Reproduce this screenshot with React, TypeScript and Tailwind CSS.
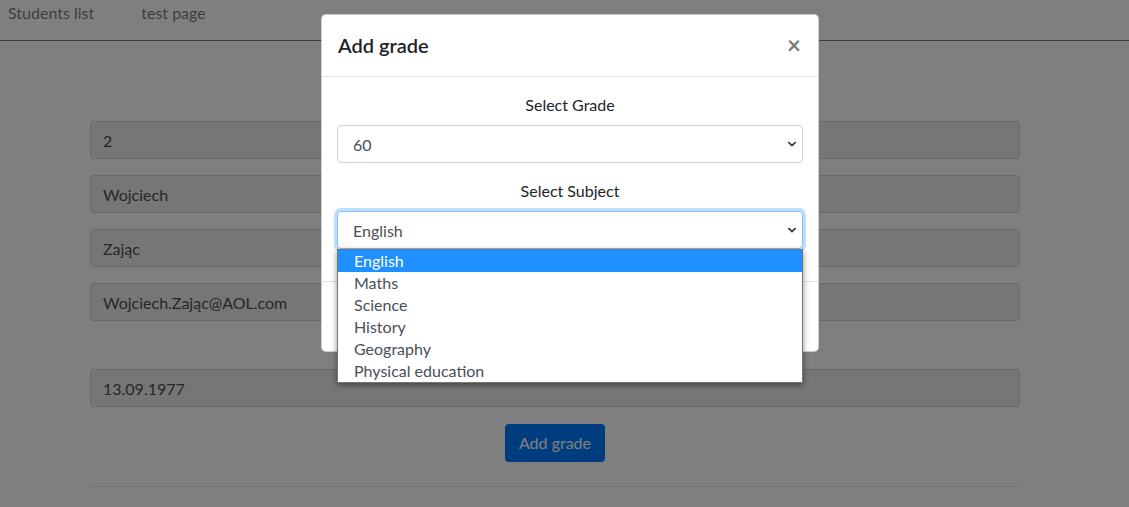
import React from "react";

const font = { fontFamily: 'Lato, "Noto Sans", sans-serif' };

function Chevron() {
  return (
    <svg width="10" height="7" viewBox="0 0 10 7" className="absolute right-[5px] top-1/2 -translate-y-1/2">
      <path d="M1.3 1.6 L5 5 L8.7 1.6" fill="none" stroke="#3a3f44" strokeWidth="1.7" />
    </svg>
  );
}

export default function App() {
  const fields = ["2", "Wojciech", "Zając", "Wojciech.Zając@AOL.com"];
  const options = ["English", "Maths", "Science", "History", "Geography", "Physical education"];
  return (
    <div className="relative w-[1129px] h-[507px] overflow-hidden bg-white text-[16px] text-[#212529]" style={font}>
      {/* navbar */}
      <div className="h-[41px] border-b border-[#787878] flex items-start pl-[8px] pt-[1px] gap-[47px] text-[rgba(0,0,0,0.55)]">
        <span className="leading-[24px]">Students list</span>
        <span className="leading-[24px]">test page</span>
      </div>
      {/* form */}
      <div className="ml-[90px] w-[930px] pt-[80px] flex flex-col">
        {fields.map((f) => (
          <div key={f} className="h-[38px] mb-[16px] rounded-[4px] border border-[#ced4da] bg-[#e9ecef] px-[12px] pt-[1px] flex items-center text-[#495057]">
            {f}
          </div>
        ))}
        <div className="h-[32px]" />
        <div className="h-[38px] rounded-[4px] border border-[#ced4da] bg-[#e9ecef] px-[12px] pt-[1px] flex items-center text-[#495057]">
          13.09.1977
        </div>
        <div className="flex justify-center mt-[17px]">
          <div className="w-[100px] h-[38px] rounded-[4px] bg-[#007bff] text-white flex items-center justify-center">Add grade</div>
        </div>
        <div className="mt-[24px] border-t border-[rgba(0,0,0,0.1)]" />
      </div>

      {/* backdrop */}
      <div className="absolute inset-0 bg-black/50" />

      {/* modal */}
      <div className="absolute left-[321px] top-[14px] w-[498px] rounded-[5px] bg-white border border-[rgba(0,0,0,0.2)] flex flex-col">
        <div className="h-[62px] flex items-center justify-between px-[16px] pb-[2px] border-b border-[#dee2e6]">
          <span className="text-[20px] font-semibold leading-[30px] text-[#212529]">Add grade</span>
          <span className="text-[24px] font-bold text-[#7a7a7a] leading-none mr-[1px]">×</span>
        </div>
        <div className="px-[15px] pt-[16px] pb-[32px] flex flex-col">
          <div className="text-center leading-[24px] mb-[8px]">Select Grade</div>
          <div className="relative h-[38px] rounded-[4px] border border-[#ced4da] px-[15px] pt-[1px] flex items-center text-[#495057] mb-[16px]">
            60
            <Chevron />
          </div>
          <div className="text-center leading-[24px] mb-[8px]">Select Subject</div>
          <div className="relative h-[38px] rounded-[4px] border border-[#80bdff] shadow-[0_0_0_3px_rgba(0,123,255,0.25)] px-[15px] pt-[1px] flex items-center text-[#495057]">
            English
            <Chevron />
          </div>
        </div>
        <div className="h-[70px] border-t border-[#dee2e6]" />
      </div>

      {/* dropdown list */}
      <div className="absolute left-[337px] top-[249px] w-[466px] bg-white border border-[#767676] shadow-[0_2px_6px_rgba(0,0,0,0.45)] flex flex-col text-[#495057]">
        {options.map((o, i) => (
          <div
            key={o}
            className={
              i === 0
                ? "h-[22px] leading-[22px] pl-[16px] bg-[#1e90ff] text-white"
                : "h-[22px] leading-[22px] pl-[16px]"
            }
          >
            {o}
          </div>
        ))}
      </div>
    </div>
  );
}
